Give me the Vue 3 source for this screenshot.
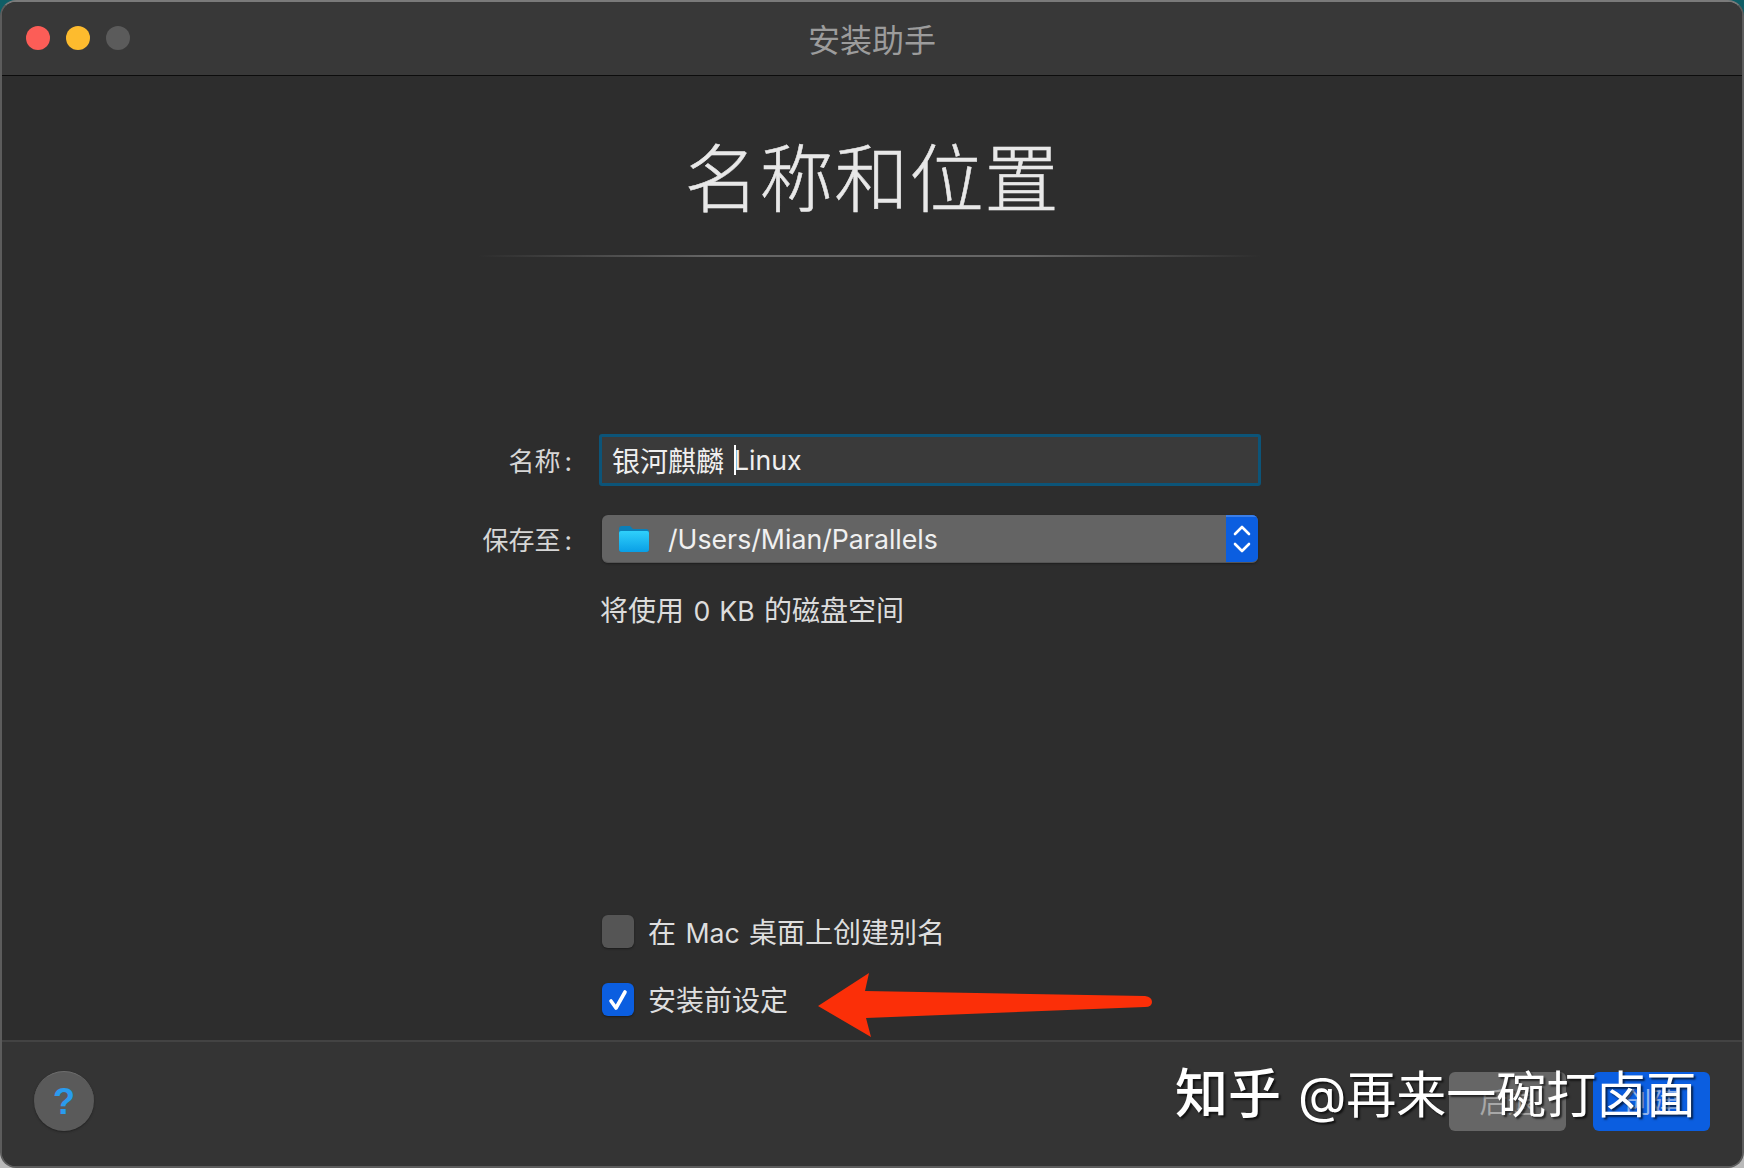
<script setup>
import { ref } from 'vue'

const name = ref('银河麒麟 ')
const path = ref('/Users/Mian/Parallels')
</script>

<template>
  <div class="window">
    <div class="titlebar">
      <div class="lights">
        <span class="light red"></span>
        <span class="light yellow"></span>
        <span class="light gray"></span>
      </div>
      <div class="title">安装助手</div>
    </div>

    <div class="main">
      <h1 class="heading">名称和位置</h1>
      <div class="divider"></div>

      <div class="form">
        <label class="label">名称<span class="colon">:</span></label>
        <div class="input">
          <span class="pre">{{ name }}</span><span class="caret"></span><span class="latin">Linux</span>
        </div>

        <label class="label second">保存至<span class="colon">:</span></label>
        <div class="select second">
          <svg class="folder" width="32" height="28" viewBox="0 0 32 28">
            <defs>
              <linearGradient id="fold" x1="0" y1="0" x2="0" y2="1">
                <stop offset="0" stop-color="#2fd0fb" />
                <stop offset="1" stop-color="#0a9fe6" />
              </linearGradient>
            </defs>
            <path d="M1 4q0-3 3-3h8l3 3h13q3 0 3 3v17q0 3-3 3H4q-3 0-3-3z" fill="#0b7fb8" />
            <path d="M1 8q0-2 2-2h26q2 0 2 2v16q0 3-3 3H4q-3 0-3-3z" fill="url(#fold)" />
          </svg>
          <span class="path latin">{{ path }}</span>
          <div class="stepper">
            <svg width="20" height="32" viewBox="0 0 20 32" fill="none" stroke="#fff" stroke-width="2.6" stroke-linecap="round" stroke-linejoin="round">
              <path d="M3 11l7-7 7 7" />
              <path d="M3 21l7 7 7-7" />
            </svg>
          </div>
        </div>

        <div class="disk">将使用 <span class="latin">0 KB</span> 的磁盘空间</div>
      </div>

      <div class="checks">
        <div class="check-row">
          <span class="box"></span>
          <span class="check-text">在 <span class="latin">Mac</span> 桌面上创建别名</span>
        </div>
        <div class="check-row">
          <span class="box on">
            <svg width="26" height="26" viewBox="0 0 26 26" fill="none" stroke="#fff" stroke-width="3.6" stroke-linecap="round" stroke-linejoin="round">
              <path d="M6 14l5 7 9-16" />
            </svg>
          </span>
          <span class="check-text">安装前设定</span>
        </div>
      </div>
    </div>

    <div class="footer">
      <div class="help">?</div>
      <div class="buttons">
        <button class="btn back">后退</button>
        <button class="btn create">创建</button>
      </div>
    </div>

    <!-- 箭头和水印是盖在上面的 -->
    <svg class="arrow" width="350" height="72" viewBox="0 0 350 72">
      <path d="M5 38L56 5 52 23 332 28Q339 29 339 34 339 39 332 39L53 50 58 69z" fill="#fb2f08" />
    </svg>
    <div class="watermark"><span class="zhihu">知乎</span> <span class="author">@再来一碗打卤面</span></div>
  </div>
</template>

<style>
html,
body {
  margin: 0;
  background: linear-gradient(#0f5e66 50%, #b9b9b9 50%);
}
</style>

<style scoped>
.window {
  position: relative;
  width: 1744px;
  height: 1168px;
  box-sizing: border-box;
  display: flex;
  flex-direction: column;
  background: #2d2d2d;
  border: 2px solid #5c5c5c;
  border-top-color: #7a7a7a;
  border-radius: 16px;
  overflow: hidden;
  color: #e2e2e2;
  font-family: "Inter", "Noto Sans CJK SC", sans-serif;
  font-size: 28px;
}

.latin {
  font-size: 26.7px;
}

.titlebar {
  position: relative;
  flex: none;
  height: 74px;
  display: flex;
  align-items: center;
  justify-content: center;
  background: #383838;
  border-bottom: 1px solid #0c0c0c;
  box-sizing: border-box;
}

.lights {
  position: absolute;
  left: 24px;
  top: 24px;
  display: flex;
  gap: 16px;
}

.light {
  width: 24px;
  height: 24px;
  border-radius: 50%;
}

.red { background: #fc5d57; }
.yellow { background: #fdbb2e; }
.gray { background: #5b5b5b; }

.title {
  font-size: 32px;
  color: #9c9c9c;
  padding-bottom: 1px;
}

.main {
  flex: 1;
  display: flex;
  flex-direction: column;
  min-height: 0;
}

.heading {
  margin: 48px 0 0;
  text-align: center;
  font-size: 74px;
  line-height: 110px;
  font-weight: 300;
  color: #e8e8e8;
  letter-spacing: 1px;
  -webkit-text-stroke: 0.5px #e8e8e8;
}

.divider {
  margin: 21px 480px 0 476px;
  height: 2px;
  background: linear-gradient(90deg, transparent, #666 30%, #666 70%, transparent);
}

.form {
  margin-top: 177px;
  display: grid;
  grid-template-columns: 570px 664px;
  column-gap: 26px;
  align-items: center;
}

.label {
  text-align: right;
  color: #d6d6d6;
  font-size: 26px;
  padding-bottom: 2px;
}

.colon {
  margin-left: 4px;
}

.second {
  margin-top: 29px;
}

.input {
  height: 52px;
  margin: 0 1px;
  box-sizing: border-box;
  display: flex;
  align-items: center;
  padding-left: 10px;
  background: #3a3a3a;
  border: 3px solid #0c5478;
  border-radius: 3px;
  color: #efefef;
}

.pre {
  white-space: pre;
}

.caret {
  width: 2px;
  height: 30px;
  margin-left: 2px;
  margin-right: -2px;
  background: #fff;
}

.select {
  height: 48px;
  margin-left: 4px;
  margin-right: 4px;
  display: flex;
  align-items: center;
  padding-left: 16px;
  background: #646464;
  border-bottom: 1px solid #555;
  box-sizing: border-box;
  border-radius: 6px;
  overflow: hidden;
  color: #f0f0f0;
  box-shadow: 0 1px 2px #1f1f1f;
}

.path {
  margin-left: 18px;
  flex: 1;
}

.stepper {
  width: 32px;
  height: 48px;
  display: flex;
  align-items: center;
  justify-content: center;
  background: #0b5ee0;
  box-shadow: inset 0 2px 0 #3a7ee8;
}

.disk {
  grid-column: 2;
  margin: 26px 0 0 2px;
  color: #dcdcdc;
  word-spacing: 1.5px;
}

.checks {
  margin-top: auto;
  padding: 0 0 24px 600px;
  display: flex;
  flex-direction: column;
  gap: 35px;
}

.check-row {
  display: flex;
  align-items: center;
  gap: 14px;
  height: 33px;
  color: #dedede;
}

.check-text {
  padding-bottom: 2px;
  word-spacing: 1.5px;
}

.box {
  width: 32px;
  height: 33px;
  box-sizing: border-box;
  display: flex;
  align-items: center;
  justify-content: center;
  background: #555;
  border-radius: 6px;
  box-shadow: 0 1px 2px #1c1c1c;
}

.box.on {
  background: #0b5ee0;
}

.footer {
  flex: none;
  height: 126px;
  box-sizing: border-box;
  border-top: 2px solid #434343;
  background: #343434;
  display: flex;
  align-items: center;
  justify-content: space-between;
  padding: 0 32px 6px 32px;
}

.help {
  width: 60px;
  height: 60px;
  box-sizing: border-box;
  border-radius: 50%;
  display: flex;
  align-items: center;
  justify-content: center;
  background: #5a5a5a;
  border-top: 1px solid #6e6e6e;
  box-shadow: 0 1px 2px #222;
  color: #2a9bee;
  font-size: 36px;
  font-weight: 700;
  font-family: "Liberation Sans", sans-serif;
}

.buttons {
  display: flex;
  gap: 27px;
}

.btn {
  width: 117px;
  height: 59px;
  border: none;
  border-radius: 6px;
  font-family: inherit;
  font-size: 28px;
  padding: 0;
}

.back {
  background: #666;
  color: #a8a8a8;
}

.create {
  background: #0b5ee0;
  color: #8fb4ee;
}

.arrow {
  position: absolute;
  left: 811px;
  top: 966px;
}

.watermark {
  position: absolute;
  left: 1173px;
  top: 1056px;
  font-size: 50px;
  line-height: 72px;
  white-space: nowrap;
  color: #fff;
  text-shadow: 2px 2px 2px rgba(0, 0, 0, 0.65);
}

.zhihu {
  font-size: 53px;
  font-weight: 500;
}

.author {
  margin-left: 3px;
}
</style>
